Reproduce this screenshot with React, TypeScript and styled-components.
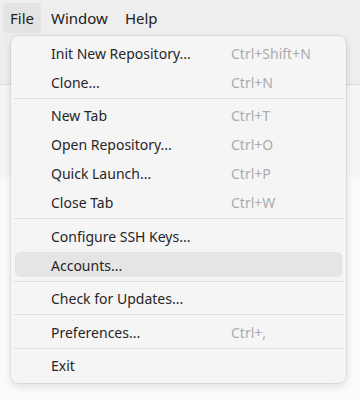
import React from "react";
import styled, { createGlobalStyle } from "styled-components";

const Global = createGlobalStyle`
  html, body { margin: 0; padding: 0; }
  body { font-family: "Noto Sans", "Open Sans", sans-serif; background: #f9f9f9; }
`;

const Page = styled.div`
  position: relative;
  width: 360px;
  height: 400px;
  overflow: hidden;
  display: flex;
  flex-direction: column;
  background: #fbfbfb;
`;

const TopArea = styled.div`
  height: 84px;
  background: #eeeeee;
  border-bottom: 1px solid #dadada;
  display: flex;
  flex-direction: column;
`;

const MenuBar = styled.div`
  display: flex;
  align-items: center;
  gap: 3px;
  padding: 3px 3px 0;
  height: 30px;
`;

const BarItem = styled.div<{ $active?: boolean }>`
  height: 30px;
  display: flex;
  align-items: center;
  padding: 0 7px;
  border-radius: 4px;
  font-size: 15px;
  color: #222222;
  background: ${(p) => (p.$active ? "#e3e3e3" : "transparent")};
`;

const Content = styled.div`
  flex: 1;
  display: flex;
  flex-direction: column;
`;

const ContentBand = styled.div`
  height: 92px;
  background: #f6f6f6;
`;

const Menu = styled.div`
  position: absolute;
  left: 11px;
  top: 36px;
  width: 335px;
  padding: 2px 0 3px;
  box-sizing: border-box;
  background: #f5f5f5;
  border-radius: 8px;
  box-shadow: 0 0 0 1px rgba(0, 0, 0, 0.05), 0 3px 10px rgba(0, 0, 0, 0.13);
  display: flex;
  flex-direction: column;
`;

const Row = styled.div<{ $hover?: boolean }>`
  height: 29px;
  margin: 0 4px;
  display: grid;
  grid-template-columns: 216px 1fr;
  align-items: center;
  position: relative;
  &::before {
    content: "";
    position: absolute;
    left: 0;
    right: 0;
    top: 2px;
    bottom: 2px;
    border-radius: 5px;
    background: ${(p) => (p.$hover ? "#e5e5e5" : "transparent")};
  }
`;

const Label = styled.span`
  position: relative;
  padding-left: 36px;
  padding-top: 1px;
  font-size: 14px;
  color: #262626;
  white-space: nowrap;
`;

const Shortcut = styled.span`
  position: relative;
  padding-top: 1px;
  font-size: 14px;
  color: #ababab;
  white-space: nowrap;
`;

const Separator = styled.div`
  height: 1px;
  margin: 1.75px 3px;
  background: #dedede;
`;

type Item = { label: string; shortcut?: string; hover?: boolean } | "sep";

const items: Item[] = [
  { label: "Init New Repository...", shortcut: "Ctrl+Shift+N" },
  { label: "Clone...", shortcut: "Ctrl+N" },
  "sep",
  { label: "New Tab", shortcut: "Ctrl+T" },
  { label: "Open Repository...", shortcut: "Ctrl+O" },
  { label: "Quick Launch...", shortcut: "Ctrl+P" },
  { label: "Close Tab", shortcut: "Ctrl+W" },
  "sep",
  { label: "Configure SSH Keys..." },
  { label: "Accounts...", hover: true },
  "sep",
  { label: "Check for Updates..." },
  "sep",
  { label: "Preferences...", shortcut: "Ctrl+," },
  "sep",
  { label: "Exit" },
];

export default function App() {
  return (
    <>
      <Global />
      <Page>
        <TopArea>
          <MenuBar>
            <BarItem $active>File</BarItem>
            <BarItem>Window</BarItem>
            <BarItem>Help</BarItem>
          </MenuBar>
        </TopArea>
        <Content>
          <ContentBand />
        </Content>
        <Menu>
          {items.map((it, i) =>
            it === "sep" ? (
              <Separator key={i} />
            ) : (
              <Row key={i} $hover={it.hover}>
                <Label>{it.label}</Label>
                <Shortcut>{it.shortcut ?? ""}</Shortcut>
              </Row>
            )
          )}
        </Menu>
      </Page>
    </>
  );
}
